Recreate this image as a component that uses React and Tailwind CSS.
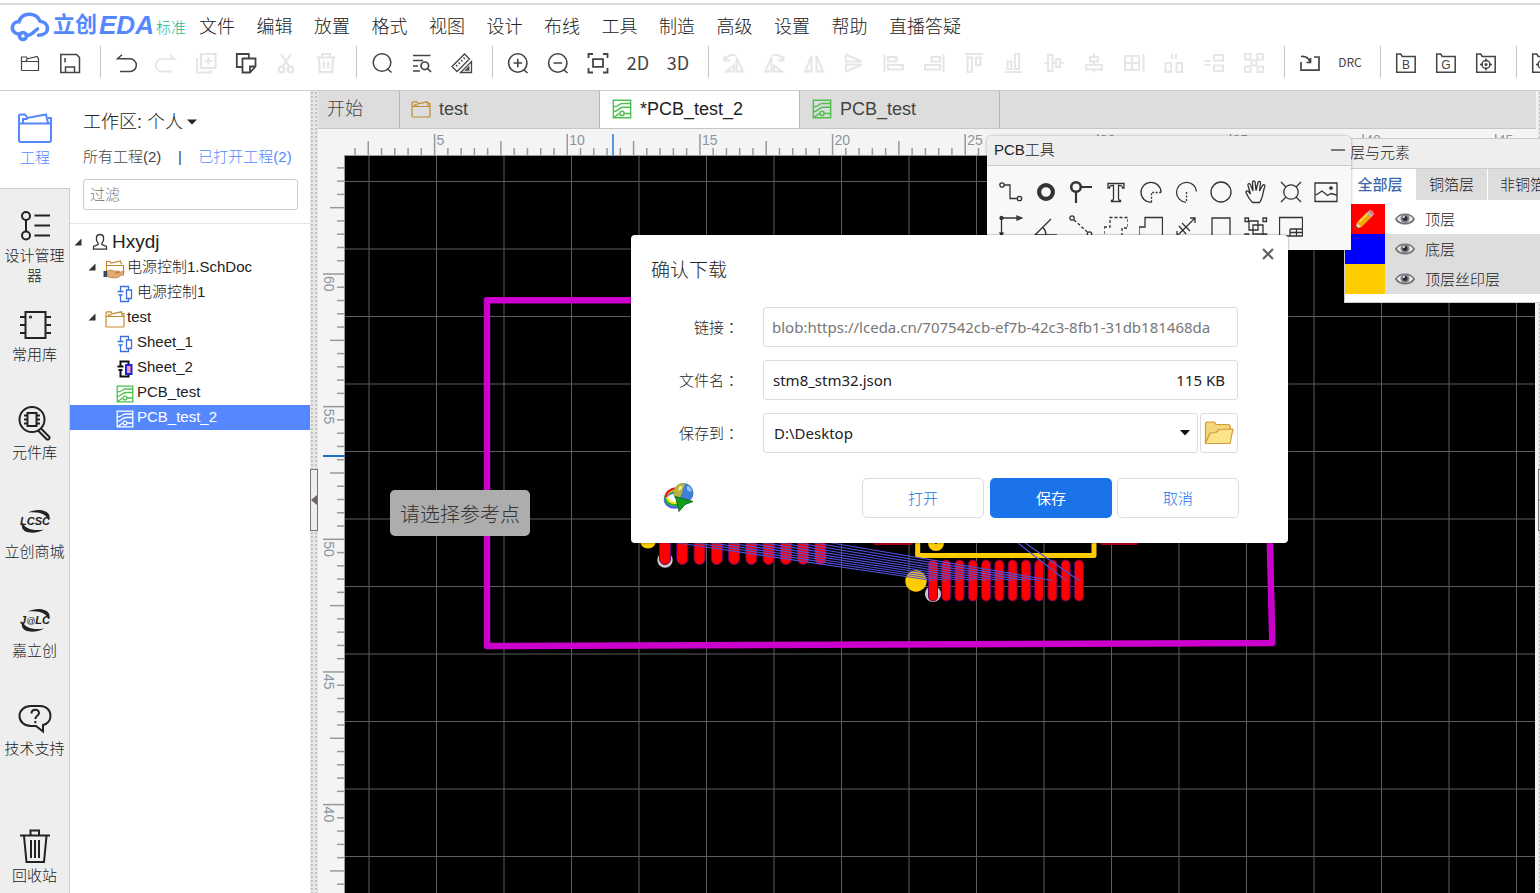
import React from "react";

const range = (n) => Array.from({ length: n }, (_, i) => i);

function Icon({ size = 24, children, className = "", sw = 1.5 }) {
  return (
    <svg width={size} height={size} viewBox={`0 0 ${size} ${size}`} fill="none" stroke="currentColor" strokeWidth={sw} className={"shrink-0 " + className} aria-hidden="true">
      {children}
    </svg>
  );
}

const FolderLayer = ({ children }) => (
  <Icon>
    <path d="M2.7 21.3V3h4l1.5 2.5h13v15.8z" />
    {children}
  </Icon>
);
const glyph = { stroke: "none", fill: "currentColor", textAnchor: "middle", fontFamily: "Liberation Sans, sans-serif" };

const ICONS = {
  open: <Icon sw={1.2}><path d="M3.5 19.5V6h5l1 2M3.5 19.5h17V8L19 5.5 9 8l-1 2M3.5 10.5h17M9 8l-1 2.5" /></Icon>,
  save: <Icon><path d="M2.8 3.5h15.7l3 3v15H2.8zM7.5 21v-5h9v5M7 7v4.5" /></Icon>,
  undo: <Icon><path d="M8 3.8 3.5 7.8h12.5a6.3 6.3 0 0 1 0 12.7H6" /></Icon>,
  redo: <Icon sw={1.8}><path d="m16 3.8 4.5 4H8a6.3 6.3 0 0 0 0 12.7h10" /></Icon>,
  duplicate: <Icon sw={2.2}><path d="M7 3h14.500v14H7zM14.300 6.500v7M10.800 10H18M4.500 8H3v13.500h13.500V19" /></Icon>,
  copy: <Icon sw={1.8}><path d="M8 16H2.800V3h12v4M8.500 7.500h13v8L16 21.500H8.500zM21.500 15.500H16v6" /></Icon>,
  cut: <Icon sw={2.2}><path d="m7 3 8.500 13M17 3 8.500 16" /><circle cx="7.5" cy="18.5" r="2.8" /><circle cx="16.5" cy="18.5" r="2.8" /></Icon>,
  trash: <Icon sw={2.2}><path d="M2.500 6.500h19M8 6V3h8v3M5 7l.8 14.200h12.400L19 7M9.800 10.500v7M14.200 10.500v7" /></Icon>,
  search: <Icon><circle cx="12" cy="11.5" r="8.8" /><path d="m17 17.500 4.500 4" /></Icon>,
  find: <Icon sw={1.7}><path d="M3 4.500h17.500M3 9.500h10M3 15h5M3 20h7" /><circle cx="14.8" cy="14.8" r="3.8" /><path d="m17.500 17.500 3.500 3.500" /></Icon>,
  ruler: <Icon sw={1.3}><path d="M2 15.500 14.500 3l5 5L7 20.500zM6 14l1.500 1.500M8.500 11.500 10 13M11 9l1.500 1.500M13.500 6.500 15 8M21.500 10.500v11h-11zM18.800 16v3h-3z" /></Icon>,
  zoomIn: <Icon sw={1.6}><circle cx="11.8" cy="12" r="9.2" /><path d="m17.500 18.500 4 3.500M7.500 12h8.600M11.800 7.700v8.600" /></Icon>,
  zoomOut: <Icon sw={1.6}><circle cx="11.8" cy="12" r="9.2" /><path d="m17.500 18.500 4 3.500M7.500 12h8.600" /></Icon>,
  fit: <Icon sw={1.8}><path d="M2.500 7V3H7M17 3h4.500v4M21.500 17v4.500H17M7 21.500H2.500V17M7 8.200h10v7.600H7z" /></Icon>,
  rotateLeft: <Icon sw={2}><path d="M3 8.500C6 3.500 11 2.500 14 5M2.500 5v4.500H8M14.500 20.500V6.500L21 20.500zM12 20.500H4l8-6z" /></Icon>,
  rotateRight: <Icon sw={2}><path d="M21 8.500C18 3.500 13 2.500 10 5M21.500 5v4.500H16M9.500 20.500V6.500L3 20.500zM12 20.500h8l-8-6z" /></Icon>,
  mirror: <Icon sw={2}><path d="M9.500 5v15.500H3zM14.500 5v15.500H21z" /></Icon>,
  flip: <Icon sw={2}><path d="M4 3.500 20 10.500H4zM4 20.500 20 13.500H4z" /></Icon>,
  alignLeft: <Icon sw={2}><path d="M2.500 3v18M6 6h8.500v4.500H6zM6 14h15v4.500H6z" /></Icon>,
  alignRight: <Icon sw={2}><path d="M21.500 3v18M9.500 6H18v4.500H9.500zM3 14h15v4.500H3z" /></Icon>,
  alignTop: <Icon sw={2}><path d="M3 3h18M5.500 6.500H10V21H5.500zM14 6.500h4.500V14H14z" /></Icon>,
  alignBottom: <Icon sw={2}><path d="M3 21h17M5.500 10.500h4V18h-4zM13 3h4v15h-4z" /></Icon>,
  middleH: <Icon sw={2}><path d="M2.500 12H6M10.500 12H14M18 12h3.500M6 4h4.500v16H6zM14 8h4v8h-4z" /></Icon>,
  middleV: <Icon sw={2}><path d="M12 2.500V6M12 10.500V14M12 18v3.500M8 6h8v4.500H8zM4 14h16v4.500H4z" /></Icon>,
  alignGrid: <Icon sw={2}><path d="M3 5h14v14H3zM3 12h14M10 5v14M21.500 3v18" /></Icon>,
  distH: <Icon sw={2}><path d="M10 3v5M14 3v5M3.500 12H9v9H3.500zM14.500 12H20v9h-5.500z" /></Icon>,
  distV: <Icon sw={2}><path d="M2.500 10h6M2.500 14h6M12 4h9v5.500h-9zM12 14.500h9V20h-9z" /></Icon>,
  distArray: <Icon sw={2}><path d="M3 3h5.500v5.500H3zM15.500 3H21v5.500h-5.500zM3 15.500h5.500V21H3zM15.500 15.500H21V21h-5.500zM9.500 9.500h5v5h-5zM8.500 8.500l1 1M15.500 8.500l-1 1M8.500 15.500l1-1M15.500 15.500l-1-1" /></Icon>,
  importChanges: <Icon sw={1.7}><path d="M3 11v8.200h18V6h-5M3 5.500c4-.5 7.500 1.500 9 5.500M12.500 7v4.500H8.500" /></Icon>,
  folderB: <FolderLayer><text x="12" y="18" fontSize="12" {...glyph}>B</text></FolderLayer>,
  folderG: <FolderLayer><text x="12" y="18" fontSize="12" {...glyph}>G</text></FolderLayer>,
  folderT: <FolderLayer><circle cx="12" cy="13.5" r="4" /><circle cx="12" cy="13.5" r=".8" /><path d="M12 7.500v3M12 16.500v3M6 13.500h3M15 13.500h3" /></FolderLayer>,
};

const TOOLBAR = [
  [["open", "打开"], ["save", "保存"]],
  [["undo", "撤销"], ["redo", "重做", 1], ["duplicate", "复制", 1], ["copy", "粘贴"], ["cut", "剪切", 1], ["trash", "删除", 1]],
  [["search", "搜索"], ["find", "查找"], ["ruler", "标尺"]],
  [["zoomIn", "放大"], ["zoomOut", "缩小"], ["fit", "适合窗口"], ["2D"], ["3D"]],
  [["rotateLeft", "左旋", 1], ["rotateRight", "右旋", 1], ["mirror", "水平翻转", 1], ["flip", "垂直翻转", 1], ["alignLeft", "左对齐", 1], ["alignRight", "右对齐", 1], ["alignTop", "上对齐", 1], ["alignBottom", "下对齐", 1], ["middleH", "水平居中", 1], ["middleV", "垂直居中", 1], ["alignGrid", "对齐网格", 1], ["distH", "水平分布", 1], ["distV", "垂直分布", 1], ["distArray", "阵列分布", 1]],
  [["importChanges", "导入变更"], ["DRC"]],
  [["folderB", "BOM"], ["folderG", "Gerber"], ["folderT", "坐标文件"]],
  [["folderT", "分享"]],
];

const MENUS = ["文件", "编辑", "放置", "格式", "视图", "设计", "布线", "工具", "制造", "高级", "设置", "帮助", "直播答疑"];

function Header() {
  return (
    <header className="mt-[3px] shrink-0 overflow-hidden border-t-2 border-b border-t-[#dadae0] border-b-[#ccc]">
      <div className="flex h-[41px] items-center pt-[3px] pl-2.5">
        <a href="#home" className="flex w-[189px] shrink-0 items-center text-[#5588ff]" aria-label="立创EDA 标准">
          <svg width="40" height="30" viewBox="0 0 40 30" fill="none" stroke="currentColor" strokeWidth="3.6" strokeLinecap="round" className="shrink-0">
            <path d="M8 22C3.500 21 1.800 17.500 2.500 14.500c.8-3.500 4-5 6.500-4.700C10.500 4.500 15 2 20 2.200c4.500.2 8.500 3 10 7 4 .5 7.500 3.300 7.500 7 0 4-3.500 7-9 7" />
            <path d="M16.500 23.500c4 0 6-2 8.500-4.500 1-1 1.500-1.500 2.500-2" />
            <circle cx="13" cy="24" r="3.5" />
          </svg>
          <span className="flex w-[106px] items-center pb-1 pl-[3px] leading-7 font-bold">
            <span className="text-[22px]">立创</span>
            <span className="pl-0.5 text-[26px] italic">EDA</span>
          </span>
          <span className="pt-0.5 text-[15px] leading-5 font-light whitespace-nowrap text-[#2bb795]">标准</span>
        </a>
        <nav className="flex w-[762px] shrink-0 justify-between text-lg leading-6 font-light text-[#222]">
          {MENUS.map((m) => (
            <button key={m} type="button" className="whitespace-nowrap">{m}</button>
          ))}
        </nav>
      </div>
      <div className="flex h-11 items-start pb-3 pl-2.5">
        {TOOLBAR.map((group, gi) => (
          <div key={gi} className="flex h-8 shrink-0">
            {gi > 0 && <span className="mr-[5px] ml-2.5 h-8 w-px bg-[#c4c4c4]" />}
            {group.map(([id, label, off], i) => (
              <button key={i} type="button" aria-label={label || id} disabled={!!off} className={"flex h-8 w-10 items-center justify-center pt-0.5 " + (off ? "text-[#e6e6e6]" : "text-[#444]")}>
                {ICONS[id] || <span className={"pb-0.5 font-['Noto_Sans_CJK_SC',sans-serif] " + (id === "DRC" ? "text-xs" : "text-lg leading-6")}>{id}</span>}
              </button>
            ))}
          </div>
        ))}
      </div>
    </header>
  );
}

const Swoosh = ({ children }) => (
  <Icon size={36}>
    <path d="M11 8.500C18 4.500 29 5 32 10.500c1 2 .5 4-.8 6C30.500 10.500 22 7 11 8.500zM27 25.500C18 30.500 7 29.500 5 23.500c-.5-2 0-3.500 1-5C7 24.500 16 27.500 27 25.500z" fill="currentColor" stroke="none" />
    {children}
  </Icon>
);

const RAIL = [
  ["设计管理器", <Icon size={36} sw={2} key="a"><circle cx="9" cy="8" r="4" /><circle cx="9" cy="27.5" r="4" /><path d="M9 12v11.500M17.500 7.500H33M17.500 17.500H33M17.500 27.500H33" /></Icon>],
  ["常用库", <Icon size={36} sw={2} key="b"><path d="M8.500 5h20v26h-20zM3 10h5.500M3 18h5.500M3 26h5.500M28.500 10H34M28.500 18H34M28.500 26H34" /><circle cx="13.5" cy="10" r=".6" /></Icon>],
  ["元件库", <Icon size={36} sw={2} key="c"><circle cx="15" cy="14.5" r="12.5" /><path d="M10.500 8h9v13h-9zM7 10.500h3.500M7 14.500h3.500M7 18.500h3.500M19.500 10.500H23M19.500 14.500H23M19.500 18.500H23M24 23.500l8.500 8.500a2 2 0 0 1-2.500 2.500l-9-9" /></Icon>],
  ["立创商城", <Swoosh key="d"><text x="18" y="21" fontSize="11" fontWeight="700" fontStyle="italic" {...glyph}>LCSC</text></Swoosh>],
  ["嘉立创", <Swoosh key="e"><text x="18" y="21" fontSize="11" fontWeight="700" fontStyle="italic" {...glyph}>J<tspan fontWeight="400" fontSize="9">@</tspan>LC</text></Swoosh>],
  ["技术支持", <Icon size={36} sw={2} key="f"><path d="M14 5h9c6 0 10.500 4 10.500 9.500S30 23 26 24v6.500L19 25h-5C7 25 2.500 20.500 2.500 15S7 5 14 5z" /><path d="M14.500 12.500c0-5 7.500-5 7.500-.5 0 3-3.700 2.500-3.700 6M18.300 20v2.200" /></Icon>],
];

const BigFolder = () => (
  <Icon size={36} sw={2}><path d="M2 15V6a1.500 1.500 0 0 1 1.500-1.500H8L10.500 8 29 4.500 31 13M2 13.500h32V30a2 2 0 0 1-2 2H4a2 2 0 0 1-2-2zM6 13V9h4.500M31 8h3v6" /></Icon>
);

function Rail() {
  return (
    <nav className="flex w-[70px] shrink-0 flex-col border-r border-[#ccc] bg-[#eee] text-[15px] leading-5 font-light text-[#222]">
      <button type="button" className="-mr-px flex h-[98px] shrink-0 flex-col items-center gap-0.5 border-b border-[#ccc] bg-white pt-[19px] text-[#5588ff]">
        <BigFolder />
        工程
      </button>
      {RAIL.map(([t, ic]) => (
        <button key={t} type="button" className="flex min-h-0 flex-1 flex-col items-center gap-0.5 px-1 pt-[19px]">
          {ic}
          <span>{t}</span>
        </button>
      ))}
      <button type="button" className="flex h-[112px] shrink-0 flex-col items-center gap-0.5 pt-[47px]">
        <Icon size={36} sw={2}><path d="M3 7.500h30M13.500 7V2.500h8.500V7M7 8l2.500 26h17.500l2.500-26M14 12v18M18 12v18M22 12v18" /></Icon>
        回收站
      </button>
    </nav>
  );
}

const FolderIcon = () => (
  <svg width="20" height="20" viewBox="0 0 20 20" fill="none" stroke="#c08a2c" strokeWidth="1.2" className="shrink-0">
    <path d="M1 17V3.800c0-.6.4-1 1-1h4l1 2 9.500-2 1 4.500M1 7.500h18v9.500c0 .6-.4 1-1 1H2c-.6 0-1-.4-1-1zM3.500 7.500V5.800h3M17.500 4.500H19v3" />
  </svg>
);
const SharedFolderIcon = () => (
  <svg width="22" height="20" viewBox="0 0 22 20" fill="none" className="shrink-0">
    <path d="M3.500 13V2.500H7l1 1.500 9.500-2 1 3.500M3.500 6.500h17V16H10" stroke="#c08a2c" strokeWidth="1.2" />
    <path d="M4 12.500c2-2 5-2 7-.5h5c1.200.2 1.200 1.800 0 2h-4l5.500-.8 2.500-1.200c1.200 0 1.400 1 .5 1.800l-4.500 4.200c-3 1.500-7 1.500-12-.5z" fill="#e3ab70" stroke="#a8713a" strokeWidth=".6" />
    <path d="M.5 12h3.500v6H.5z" fill="#3d4658" />
  </svg>
);
const SheetIcon = ({ dark }) => (
  <svg width="18" height="18" viewBox="0 0 18 18" fill="none" stroke={dark ? "#111" : "#3b6fe0"} strokeWidth={dark ? 2 : 1.3} className="shrink-0">
    <path d="M4.500 6V1.500h8V5M4.500 10.500v6h8V13.500M1.500 6.500h6M2.500 10h4" />
    <path d={dark ? "M10 5h5.500v9H10z" : "M10.500 5h5v8.500h-5z"} stroke={dark ? "#2222dd" : "#3b6fe0"} fill={dark ? "#f3a0b0" : "none"} />
  </svg>
);
const PcbIcon = ({ color = "#4fc04f", size = 18 }) => (
  <svg width={size} height={size} viewBox="0 0 18 18" fill="none" stroke={color} strokeWidth="1.3" className="shrink-0">
    <path d="M1.200 1.200h15.600v15.600H1.200zM1.500 7c5 0 4-3 8-3h7M1.500 11.500C6 11 6 7.500 10 7.500h6.500M2 16.500l4.500-3.500M11 13h5.500" />
    <circle cx="9" cy="13" r="1.9" />
  </svg>
);
const Twisty = () => (
  <svg width="8" height="8" viewBox="0 0 8 8" className="shrink-0"><path d="M7.500.5v7H.5z" fill="#333" /></svg>
);

const TREE = [
  { pad: "pl-[18px]", open: "pl-[7px] gap-0.5", icon: <SharedFolderIcon />, name: "电源控制1.SchDoc" },
  { pad: "pl-[46px]", icon: <SheetIcon />, name: "电源控制1" },
  { pad: "pl-[18px]", open: "pl-[9px] gap-0.5", icon: <FolderIcon />, name: "test" },
  { pad: "pl-[46px]", icon: <SheetIcon />, name: "Sheet_1" },
  { pad: "pl-[46px]", icon: <SheetIcon dark />, name: "Sheet_2" },
  { pad: "pl-[46px]", icon: <PcbIcon />, name: "PCB_test" },
  { pad: "pl-[46px]", icon: <PcbIcon color="#fff" />, name: "PCB_test_2", active: true },
];

function ProjectPanel() {
  return (
    <aside className="flex w-60 shrink-0 flex-col bg-white font-light text-[#222]">
      <div className="border-b border-[#e6e6e6] pt-[19px] pr-3 pb-[13px] pl-[13px]">
        <button type="button" className="flex items-center gap-1 text-lg leading-6">
          工作区: 个人
          <svg width="10" height="6" viewBox="0 0 10 6"><path d="M0 .5h10L5 5.500z" fill="#222" /></svg>
        </button>
        <div className="mt-[13px] flex text-[15px] leading-5 whitespace-nowrap text-[#444]">
          <button type="button">所有工程(2)</button>
          <span className="w-[37px] text-center">|</span>
          <button type="button" className="text-[#5588ff]">已打开工程(2)</button>
        </div>
        <input aria-label="过滤" placeholder="过滤" className="mt-3 block h-[31px] w-full rounded-[3px] border border-[#ccc] px-1.5 text-[15px] outline-none placeholder:text-[#777]" />
      </div>
      <ul className="pt-1.5 text-[15px] leading-[23px]">
        <li>
          <button type="button" className="flex h-[25px] w-full items-center pb-0.5 pl-1 text-[19px]">
            <Twisty />
            <svg width="16" height="18" viewBox="0 0 16 18" fill="none" stroke="#333" strokeWidth="1.3" className="mr-1 ml-2.5">
              <path d="M8 1.500c5 0 4 6.500 2 8.500v1.500l4.500 2v2.700h-13v-2.700l4.500-2V10C4 8 3 1.500 8 1.500z" />
            </svg>
            Hxydj
          </button>
        </li>
        {TREE.map((n) => (
          <li key={n.name}>
            <button type="button" className={"flex h-[25px] w-full items-center pb-0.5 whitespace-nowrap " + n.pad + (n.active ? " bg-[#5588ff] text-white" : "")}>
              {n.open && <Twisty />}
              <span className={"flex items-center " + (n.open || "gap-[3px]")}>
                <span className="pt-1">{n.icon}</span>
                {n.name}
              </span>
            </button>
          </li>
        ))}
      </ul>
    </aside>
  );
}

function Splitter({ right }) {
  return (
    <div className={"relative shrink-0 bg-[#e6e6e6] bg-[radial-gradient(circle_at_center,#c4c4c4_1px,transparent_1px)] bg-[length:4px_4px] " + (right ? "w-1 border-l-2 border-[#f4f4f4]" : "w-2")}>
      <button type="button" aria-label="折叠面板" className="absolute top-[378px] left-0 flex h-[62px] w-2 items-center justify-center border border-[#7d7272] bg-[#eee]">
        <svg width="6" height="10" viewBox="0 0 6 10" className="shrink-0"><path d="M6 0v10L0 5z" fill="#6f6464" /></svg>
      </button>
    </div>
  );
}

const TABS = [
  { name: "开始", w: "w-[82px] pl-[9px]" },
  { name: "test", w: "w-[200px] pl-[11px]", icon: <FolderIcon /> },
  { name: "*PCB_test_2", w: "w-[200px] pl-3", icon: <PcbIcon size={20} />, active: true },
  { name: "PCB_test", w: "w-[200px] pl-3", icon: <PcbIcon size={20} /> },
];

const STEP = 13.265;
const len = (k) => (k % 10 === 0 ? 21 : k % 5 === 0 ? 14 : 7);

function RulerH() {
  return (
    <svg className="block h-[27px] w-full" stroke="#999" strokeWidth="1.5" aria-hidden="true">
      {range(150).map((i) => {
        const k = i + 4;
        const x = 116.6 + (k - 10) * STEP;
        return (
          <g key={k}>
            <line x1={x} x2={x} y1={26 - len(k)} y2="26" />
            {k % 10 === 0 && <text x={x + 2} y="16" fontSize="14" stroke="none" fill="#8a94a0">{k / 2}</text>}
          </g>
        );
      })}
      <line x1="26" x2="100%" y1="26.5" y2="26.5" strokeWidth="1" />
      <line x1="295" x2="295" y1="5" y2="27" stroke="#5a9be0" strokeWidth="2" />
    </svg>
  );
}

function RulerV() {
  return (
    <svg className="block h-full w-[27px] shrink-0" stroke="#999" strokeWidth="1.5" aria-hidden="true">
      {range(110).map((i) => {
        const k = i - 8;
        const y = 118 + k * STEP;
        return (
          <g key={k}>
            <line y1={y} y2={y} x1={26 - len(Math.abs(k))} x2="26" />
            {k % 10 === 0 && <text transform={`translate(6 ${y + 2}) rotate(90)`} fontSize="14" stroke="none" fill="#8a94a0">{60 - k / 2}</text>}
          </g>
        );
      })}
      <line x1="26.5" x2="26.5" y1="0" y2="100%" strokeWidth="1" />
      <line x1="5" x2="27" y1="300" y2="300" stroke="#1f6fc8" strokeWidth="2" />
    </svg>
  );
}

function Board() {
  return (
    <svg className="block h-full w-full min-w-0 flex-1 bg-black" aria-label="PCB">
      <g stroke="#5c5c5c">
        {range(40).map((i) => <line key={"v" + i} x1={24 + i * 67.5} x2={24 + i * 67.5} y1="0" y2="100%" />)}
        {range(24).map((i) => <line key={"h" + i} y1={25.5 + i * 67.5} y2={25.5 + i * 67.5} x1="0" x2="100%" />)}
      </g>
      <g transform="translate(-345 -156)" fill="none">
        <path d="M487 300.200H1264L1272.300 643 487 646z" stroke="#cc00cc" strokeWidth="6.5" strokeLinejoin="round" />
        <circle cx="665" cy="560" r="7.7" fill="#c9c9c9" />
        <circle cx="933" cy="594" r="8" fill="#c9c9c9" />
        <g fill="#f00" stroke="#6b0066">
          {range(10).map((j) => <rect key={j} x={659.5 + j * 17.27} y="520" width="11" height="44.5" rx="5.5" />)}
          {range(12).map((j) => <rect key={j} x={928.5 + j * 13.27} y="560" width="9" height="41" rx="4.5" />)}
        </g>
        <rect x="872" y="525" width="42" height="20" rx="4" fill="#b00018" />
        <rect x="1099" y="525" width="40" height="20" rx="4" fill="#b00018" />
        <path d="M917.700 500V555.500H1094V500" stroke="#ffcc00" strokeWidth="5" strokeLinejoin="round" />
        <circle cx="648" cy="540.5" r="8" fill="#ffcc00" />
        <circle cx="916" cy="581" r="10.7" fill="#ffcc00" />
        <circle cx="936" cy="543" r="8" fill="#ffcc00" />
        <circle cx="936" cy="543" r="1" fill="#000" />
        <g stroke="#5050d8" strokeWidth="1.2">
          {range(10).map((j) => <line key={j} x1={665 + 17.27 * j} y1="541" x2={933 + 13.27 * j} y2="580.5" />)}
          <path d="M1014 540 1066 580.500M1021 540l58 40.500" />
        </g>
      </g>
    </svg>
  );
}

const TOOLS = [
  ["导线", <><circle cx="3" cy="5" r="2.2" /><circle cx="20.5" cy="18.5" r="2.2" /><path d="M5 5h6v13.500h7" /></>],
  ["焊盘", <circle cx="12" cy="12" r="6.9" strokeWidth="4.2" />],
  ["过孔", <><circle cx="7" cy="7" r="4.8" strokeWidth="2.6" /><path d="M12 7h11M7 12v11" strokeWidth="2.2" /></>],
  ["文本", <path d="M4 3.500h16v4.500h-1.500c0-2-.5-2.700-4-2.700v13.700c0 1 .8 1.300 2 1.300v1.200h-9v-1.200c1.300 0 2-.3 2-1.300V5.300c-3.500 0-4 .7-4 2.700H4z" />],
  ["圆弧", <><path d="M12.500 22.300A10 10 0 1 1 22 12.500" /><path d="M12.500 22.300V12.500H22" strokeDasharray="2 1.5" /></>],
  ["中心圆弧", <><path d="M12 22.300A10 10 0 1 1 22.500 11.500" /><path d="M12.500 12v10" strokeDasharray="2 1.5" /></>],
  ["圆", <circle cx="12" cy="12" r="10" />],
  ["移动", <path d="M8.500 22.500C5 19 3 15 2 12.500c-.5-1.500 1.500-2.200 2.500-.8L6.500 14 4 5.500c-.5-2 2-2.500 2.500-.7L9 11 8.500 2.500c0-2 2.500-2 2.700 0L12 10.500l2-8c.4-1.700 2.700-1.300 2.500.5L15.500 11l3-5.500c1-1.500 3-.5 2.300 1.200-2 4-1.500 11-5.300 15.800z" />],
  ["通孔", <><circle cx="12" cy="12" r="7.2" /><path d="m2 2 5 5M22 2l-5 5M2 22l5-5M22 22l-5-5" /></>],
  ["图片", <><path d="M1 3h22v18.500H1zM2 15l6-4 5.500 4.500 3.500-2 5.500 1.500" /><circle cx="17" cy="8" r="1.2" fill="currentColor" /></>],
  ["坐标原点", <><circle cx="2.5" cy="3" r="1.5" fill="currentColor" /><path d="M2.500 3H22M18 1l5 2-5 2zM2.500 3v19M1 18l1.500 4L4 18z" /></>],
  ["量角器", <path d="M17 4 1 20h22M9 12.500c2 2 3 4.500 3 7.500" />],
  ["连接焊盘", <><circle cx="3" cy="3" r="2.2" /><circle cx="20.5" cy="19" r="2.2" /><path d="m5 5 14 12.500" strokeDasharray="3 2" /></>],
  ["覆铜", <path d="M0 12h6V2.500h18V13h-6v9H0z" strokeDasharray="3 2" />],
  ["实心填充", <path d="M0 12h6V2.500h17.500V22H0z" />],
  ["尺寸", <path d="m3 21 18-18M16 3h5v5M3 16v5h5M8 8l8 8M5 11l7 8" />],
  ["矩形", <path d="M3 3h18v18H3z" />],
  ["组合", <path d="M1 3h3.500v3.500H1zM19 3h3.500v3.500H19zM1 19h3.500v3.500H1zM19 19h3.500v3.500H19zM5 6h9v9H5zM9 10h10v9H9z" />],
  ["面板", <path d="M.5 2.500h23V21H.5zM11 14h13M11 17.500h13M11 14v7M17.500 14v7" />],
];

function ToolPanel() {
  return (
    <section className="absolute top-[136px] left-[987px] z-20 h-[114px] w-[364px] overflow-hidden rounded-t-[5px] bg-[#f8f8f8] shadow-[0_0_3px_rgba(0,0,0,0.35)]">
      <div className="flex h-[30px] items-center justify-between border-b border-[#ccc] bg-[#eee] pr-1.5 pb-0.5 pl-[7px] text-[15px] leading-5 font-light text-[#222]">
        <h2>PCB工具</h2>
        <button type="button" aria-label="最小化" className="flex h-5 w-3.5 items-center"><span className="h-0.5 w-full bg-[#777]" /></button>
      </div>
      <div className="grid grid-cols-[repeat(10,35px)] px-1.5 pt-2 text-[#333]">
        {TOOLS.map(([t, d]) => (
          <button key={t} type="button" aria-label={t} className="flex h-[35px] items-center justify-center">
            <Icon sw={1.3}>{d}</Icon>
          </button>
        ))}
      </div>
    </section>
  );
}

const Eye = () => (
  <svg width="20" height="14" viewBox="0 0 20 14" className="shrink-0">
    <ellipse cx="10" cy="8" rx="9" ry="5" fill="#c0c0c0" />
    <path d="M.8 7C5 .5 15 .5 19.200 7 15 13 5 13 .8 7z" fill="#e8e8e8" stroke="#6c6c6c" strokeWidth="1.4" />
    <circle cx="10" cy="6.5" r="4.5" fill="#85858c" />
    <circle cx="10" cy="6.5" r="2.5" fill="#2b2b38" />
    <circle cx="8.8" cy="5" r="1" fill="#fff" />
  </svg>
);
const Pencil = () => (
  <svg width="20" height="20" viewBox="0 0 20 20">
    <path d="m.5 19.500 1.500-6L6.500 18z" fill="#f3d9a8" />
    <path d="m.5 19.500.7-2.600 1.900 1.900z" fill="#333" />
    <path d="M2 13.500 11.500 4 16 8.500 6.500 18z" fill="#f5a800" />
    <path d="M3.500 12 12 3.500l1.500 1.500L5 13.500z" fill="#ffd34d" />
    <path d="m11.500 4 2-2L18 6.500l-2 2z" fill="#b9b9b9" />
    <path d="m13.500 2 1-1c1-1 5.500 3 4.500 4.500l-1 1z" fill="#e87f7f" />
  </svg>
);

function LayerPanel() {
  const tab = "shrink-0 whitespace-nowrap text-center";
  return (
    <section className="absolute top-[138px] left-[1344px] z-10 h-[165px] w-[240px] border border-[#ccc] bg-white text-[15px] text-[#222]">
      <h2 className="h-[30px] border-b border-[#ccc] bg-[#eee] pl-[5px] leading-7 font-light">层与元素</h2>
      <div className="flex h-[31px] gap-px leading-[31px]">
        <button type="button" className={tab + " w-[70px] bg-white font-medium text-[#3a68ae]"}>全部层</button>
        <button type="button" className={tab + " w-[71px] bg-[#ddd] font-light"}>铜箔层</button>
        <button type="button" className={tab + " w-[84px] bg-[#ddd] font-light"}>非铜箔层</button>
      </div>
      <ul className="pt-1 leading-[30px] font-light">
        {[["顶层", "bg-[#ff0000]", ""], ["底层", "bg-[#0000ff]", "bg-[#ddd]"], ["顶层丝印层", "bg-[#ffcc00]", "bg-[#ddd]"]].map(([n, c, bg], i) => (
          <li key={n} className={"flex h-[30px] items-center " + bg}>
            <span className={"flex h-[30px] w-10 items-center justify-center " + c}>{i === 0 && <Pencil />}</span>
            <button type="button" aria-label={"显示 " + n} className="mx-2.5"><Eye /></button>
            <span className="pt-px">{n}</span>
          </li>
        ))}
      </ul>
    </section>
  );
}

const Label = ({ id, children }) => (
  <label htmlFor={id} className="mr-6 w-[88px] shrink-0 text-right text-[15px] font-light text-[#222]">
    {children}
    <span className="font-['Noto_Sans_CJK_TC',sans-serif]">：</span>
  </label>
);

function DownloadDialog() {
  const field = "h-10 rounded-[3px] border border-[#ddd] bg-white";
  const button = "h-10 w-[122px] rounded-[5px] text-[15px]";
  return (
    <form role="dialog" aria-label="确认下载" onSubmit={(e) => e.preventDefault()} className="absolute top-[235px] left-[631px] z-30 w-[657px] rounded-sm bg-white px-5 pb-[25px] font-['Noto_Sans','Noto_Sans_CJK_SC',sans-serif] text-[15px] shadow-[0_0_2px_rgba(0,0,0,0.6)]">
      <div className="flex h-[72px] items-start justify-between">
        <h1 className="pt-[21px] text-[19px] leading-7 font-light text-[#222]">确认下载</h1>
        <button type="button" aria-label="关闭" className="-mr-1.5 pt-[13px]">
          <svg width="12" height="12" viewBox="0 0 12 12" stroke="#5f6368" strokeWidth="2.2"><path d="m1 1 10 10M11 1 1 11" /></svg>
        </button>
      </div>
      <div className="flex flex-col gap-[13px] pr-[30px]">
        <div className="flex items-center">
          <Label id="link">链接</Label>
          <input id="link" readOnly value="blob:https://lceda.cn/707542cb-ef7b-42c3-8fb1-31db181468da" className={field + " min-w-0 flex-1 px-2 text-[#777] outline-none"} />
        </div>
        <div className="flex items-center">
          <Label id="filename">文件名</Label>
          <span className={field + " flex min-w-0 flex-1 items-center px-[9px] pr-3 text-[#222]"}>
            <input id="filename" defaultValue="stm8_stm32.json" className="min-w-0 flex-1 outline-none" />
            <span>115 KB</span>
          </span>
        </div>
        <div className="flex items-center">
          <Label id="dir">保存到</Label>
          <span className="flex min-w-0 flex-1 gap-0.5">
            <span className="relative flex flex-1">
              <select id="dir" className={field + " w-full appearance-none px-2.5 text-[#222]"}><option>D:\Desktop</option></select>
              <svg width="10" height="6" viewBox="0 0 10 6" className="pointer-events-none absolute top-[17px] right-2"><path d="M0 0h10L5 5.500z" fill="#111" /></svg>
            </span>
            <button type="button" aria-label="选择文件夹" className={field + " flex w-[38px] items-center justify-center"}>
              <svg width="30" height="24" viewBox="0 0 30 24" stroke="#cf9a3a" strokeWidth="1.2" strokeLinejoin="round">
                <path d="M1.500 22V2.500L3 1h7.500L12 3.500h13l1.200 1.500v12z" fill="#f6d578" />
                <path d="M1.500 22.500 6 12l6-.5 3-3L29 8l-3 14.500z" fill="#fbe389" />
              </svg>
            </button>
          </span>
        </div>
      </div>
      <div className="flex items-start pt-[25px] pr-[29px]">
        <svg width="32" height="32" viewBox="0 0 32 32" className="mt-1 ml-3 shrink-0" fill="none" aria-label="IDM">
          <g strokeWidth="2">
            <ellipse cx="11.5" cy="17.5" rx="9" ry="7.5" stroke="#4a68e8" strokeWidth="3.5" />
            <ellipse cx="11.5" cy="16" rx="9" ry="7" stroke="#2fae2f" strokeWidth="2.5" />
            <ellipse cx="12" cy="14.5" rx="8" ry="6.5" stroke="#ffe600" />
            <path d="M3 15C3 10 8 6.500 13 6.500" stroke="#e02020" strokeWidth="2.5" />
          </g>
          <circle cx="20.5" cy="11" r="10" fill="#3f7fd6" />
          <path d="M11 8c2-5 6-7.500 10.500-6.500 1 3-2 4-2 7s-3 6-2 9C12.500 17 10 13 11 8z" fill="#b9b53a" />
          <path d="M16 5c2-2 4-1 3 1s-3 3-4 2z" fill="#f6f0a0" />
          <path d="M24 4c2 0 4.500 2 4.500 4.500s-3.500 1-4.500-1z" fill="#8cc4ff" />
          <path d="m12.500 14.500 17.500 5-8 3L16 29.500z" fill="#0f9d1b" stroke="#075d0d" strokeWidth=".8" />
        </svg>
        <span className="flex-1" />
        <button type="button" className={button + " mr-1.5 border border-[#dadce0] font-light text-[#1a73e8]"}>打开</button>
        <button type="submit" className={button + " mr-[5px] bg-[#1a73e8] text-white"}>保存</button>
        <button type="button" className={button + " border border-[#dadce0] font-light text-[#1a73e8]"}>取消</button>
      </div>
    </form>
  );
}

export default function App() {
  return (
    <div className="relative flex h-screen flex-col overflow-hidden bg-white font-['Liberation_Sans','Noto_Sans_CJK_SC',sans-serif]">
      <Header />
      <div className="flex min-h-0 flex-1">
        <Rail />
        <ProjectPanel />
        <Splitter />
        <main className="flex min-w-0 flex-1 flex-col bg-[#f4f4f4]">
          <div role="tablist" className="flex h-[38px] shrink-0 border-b border-[#c6c6c6] bg-[#ddd] text-lg leading-6 font-light text-[#444]">
            {TABS.map((t) => (
              <button key={t.name} type="button" role="tab" aria-selected={!!t.active} className={"flex h-[37px] items-center gap-2 border-r border-[#b8b8b8] pb-px " + t.w + (t.active ? " bg-white text-[#222]" : "")}>
                {t.icon}
                {t.name}
              </button>
            ))}
          </div>
          <RulerH />
          <div className="flex min-h-0 flex-1 pr-px">
            <RulerV />
            <Board />
          </div>
        </main>
        <Splitter right />
      </div>
      <div role="status" className="absolute top-[490px] left-[390px] rounded-[5px] bg-[#adadad] px-2.5 pt-[11px] pb-[7px] text-xl leading-7 font-light text-[#333]">请选择参考点</div>
      <LayerPanel />
      <ToolPanel />
      <DownloadDialog />
    </div>
  );
}
